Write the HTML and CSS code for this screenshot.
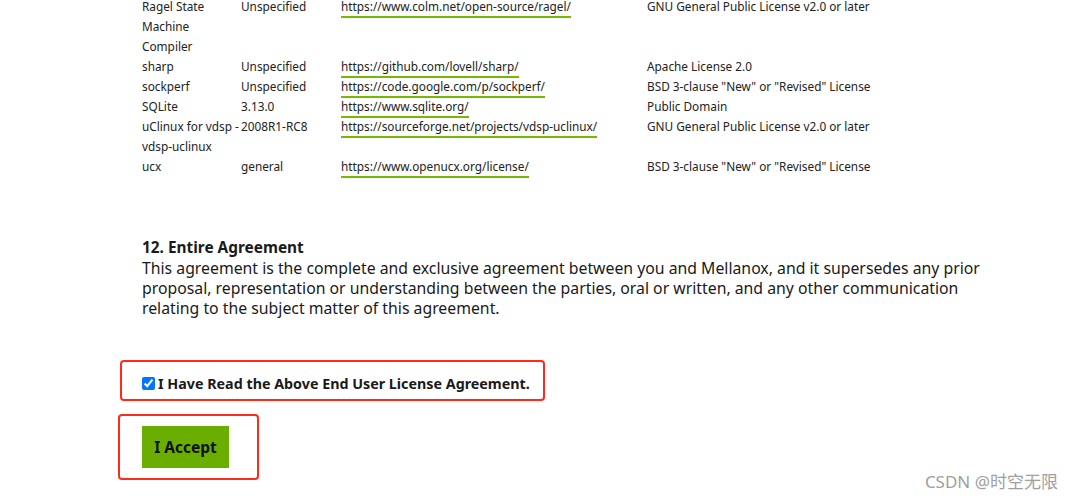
FILE: index.html
```html
<!DOCTYPE html>
<html lang="en">
<head>
    <meta charset="UTF-8">
    <title>End User License Agreement</title>
    <link rel="stylesheet" href="styles.css">
</head>
<body>
    <div class="page">
        <!-- Third party components -->
        <table class="oss">
            <tr>
                <td class="name">Ragel State Machine Compiler</td>
                <td class="ver">Unspecified</td>
                <td class="url"><a href="#">https://www.colm.net/open-source/ragel/</a></td>
                <td>GNU General Public License v2.0 or later</td>
            </tr>
            <tr>
                <td class="name">sharp</td>
                <td class="ver">Unspecified</td>
                <td class="url"><a href="#">https://github.com/lovell/sharp/</a></td>
                <td>Apache License 2.0</td>
            </tr>
            <tr>
                <td class="name">sockperf</td>
                <td class="ver">Unspecified</td>
                <td class="url"><a href="#">https://code.google.com/p/sockperf/</a></td>
                <td>BSD 3-clause "New" or "Revised" License</td>
            </tr>
            <tr>
                <td class="name">SQLite</td>
                <td class="ver">3.13.0</td>
                <td class="url"><a href="#">https://www.sqlite.org/</a></td>
                <td>Public Domain</td>
            </tr>
            <tr>
                <td class="name">uClinux for vdsp - vdsp-uclinux</td>
                <td class="ver">2008R1-RC8</td>
                <td class="url"><a href="#">https://sourceforge.net/projects/vdsp-uclinux/</a></td>
                <td>GNU General Public License v2.0 or later</td>
            </tr>
            <tr>
                <td class="name">ucx</td>
                <td class="ver">general</td>
                <td class="url"><a href="#">https://www.openucx.org/license/</a></td>
                <td>BSD 3-clause "New" or "Revised" License</td>
            </tr>
        </table>

        <!-- Section 12 -->
        <div class="section">
            <h3>12. Entire Agreement</h3>
            <p>This agreement is the complete and exclusive agreement between you and Mellanox, and it supersedes any prior proposal, representation or understanding between the parties, oral or written, and any other communication relating to the subject matter of this agreement.</p>
        </div>

        <!-- Accept form -->
        <div class="mark agree">
            <label><input type="checkbox" checked> I Have Read the Above End User License Agreement.</label>
        </div>
        <div class="mark accept">
            <button type="button">I Accept</button>
        </div>
    </div>
    <div class="watermark">CSDN @时空无限</div>
</body>
</html>
```

FILE: styles.css
```css
/* Global */
body {
    margin: 0;
    background: #ffffff;
    color: #1a1a1a;
    font-family: "Noto Sans", Arial, sans-serif;
    overflow: hidden;
}

.page {
    padding-left: 142px;
    margin-top: -4px;
}

/* Open source table */
.oss {
    border-collapse: collapse;
    font-size: 11.8px;
    line-height: 20px;
    color: #222;
}

.oss td {
    padding: 0;
    vertical-align: top;
}

.oss .name {
    width: 99px;
}

.oss .ver {
    width: 100px;
}

.oss .url {
    width: 306px;
}

.oss a {
    color: #222;
    text-decoration: none;
    border-bottom: 2px solid #76b900;
    padding-bottom: 2px;
}

/* Section */
.section {
    margin-top: 62px;
    width: 845px;
}

.section h3 {
    margin: 0;
    font-size: 15.4px;
    line-height: 20px;
    font-weight: bold;
}

.section p {
    margin: 0;
    font-size: 15.8px;
    line-height: 20px;
}

/* Annotation boxes */
.mark {
    border: 2px solid #ff2a1a;
    border-radius: 4px;
    box-sizing: border-box;
}

.agree {
    margin-top: 42px;
    margin-left: -22px;
    width: 425px;
    height: 41px;
    padding: 6px 0 0 20px;
    display: flex;
    align-items: center;
}

.agree label {
    font-size: 14.3px;
    font-weight: bold;
    display: flex;
    align-items: center;
    gap: 3px;
}

.agree input {
    margin: 0;
    width: 13px;
    height: 13px;
}

.accept {
    margin-top: 13px;
    margin-left: -24px;
    width: 141px;
    height: 66px;
    padding: 10px 0 0 22px;
}

.accept button {
    background: #6aaf00;
    border: none;
    width: 87px;
    height: 42px;
    font-family: inherit;
    font-size: 15.5px;
    font-weight: bold;
    color: #111;
    padding: 0;
}

.watermark {
    position: absolute;
    right: 16px;
    bottom: 7px;
    font-size: 17px;
    color: #a0a0a0;
    font-family: "Noto Sans", "Noto Sans CJK SC", sans-serif;
}
```
